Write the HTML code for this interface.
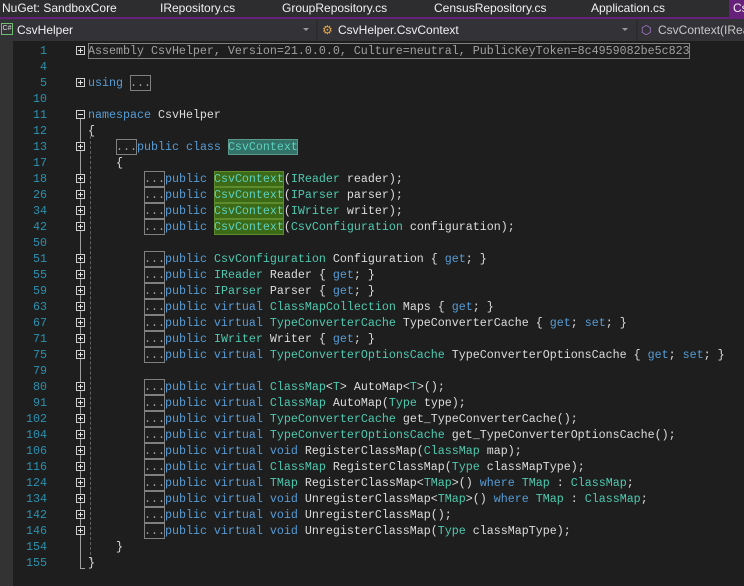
<!DOCTYPE html>
<html><head><meta charset="utf-8"><style>
*{margin:0;padding:0;box-sizing:border-box}
body{width:744px;height:586px;overflow:hidden;background:#1e1e1e;position:relative;font-family:"Liberation Sans",sans-serif}
.tabs{position:absolute;left:0;top:0;width:744px;height:17px;background:#2d2d30;color:#f1f1f1;font-size:12px}
.tabs span{position:absolute;top:1px;white-space:nowrap}
.pl{position:absolute;left:0;top:17px;width:744px;height:2px;background:#68217a}
.nav{position:absolute;left:0;top:19px;width:744px;height:22px;background:#2d2d30;color:#f1f1f1;font-size:12px}
.dd{position:absolute;top:0;height:22px;background:#333337;border-right:2px solid #2d2d30}
.dd span{position:absolute;top:4px;white-space:nowrap}
.arr{position:absolute;top:9px;width:0;height:0;border-left:3px solid transparent;border-right:3px solid transparent;border-top:3px solid #999}
.margin{position:absolute;left:0;top:41px;width:13px;height:545px;background:#333333}
.ln{position:absolute;left:13px;width:34px;text-align:right;color:#2b91af;font-family:"Liberation Mono",monospace;font-size:11.67px;line-height:16px}
.code{position:absolute;left:88px;font-family:"Liberation Mono",monospace;font-size:11.67px;line-height:16px;height:16px;white-space:pre;color:#dcdcdc}
.k{color:#569cd6}.t{color:#4ec9b0}.g{color:#808080}
.b,.hc,.hg{display:inline-block;height:16px;line-height:16px;vertical-align:top}
.b{box-shadow:inset 0 0 0 1px #808080;color:#a0a0a0}
.hc{background:#337268;box-shadow:inset 0 0 0 1px #5a9a8a;color:#5ed0bd}
.hg{background:#3c6a16;box-shadow:inset 0 0 0 1px #5e8c2c;color:#5ed0bd}
.fb{position:absolute;left:76px;width:9px;height:9px;border:1px solid #d0d0d0;background:#1e1e1e}
.fb:before{content:"";position:absolute;left:1px;top:3px;width:5px;height:1px;background:#e0e0e0}
.fb.p:after{content:"";position:absolute;left:3px;top:1px;width:1px;height:5px;background:#e0e0e0}
.vl{position:absolute;left:80px;width:1px;background:#a0a0a0}
.dg{position:absolute;left:90px;width:0;border-left:1px dashed #606060}
</style></head><body>
<div class="tabs">
<span style="left:2px">NuGet: SandboxCore</span>
<span style="left:160px">IRepository.cs</span>
<span style="left:282px">GroupRepository.cs</span>
<span style="left:434px">CensusRepository.cs</span>
<span style="left:591px">Application.cs</span>
<div style="position:absolute;left:729px;top:0;width:15px;height:17px;background:#68217a"></div>
<span style="left:733px">Cs</span>
</div>
<div class="pl"></div>
<div class="nav">
<div class="dd" style="left:0;width:318px"><div style="position:absolute;left:1px;top:4px;width:12px;height:12px;border:1px solid #6fbf73;color:#ddd;font-size:7px;line-height:10px;text-align:center">C#</div><span style="left:17px">CsvHelper</span><div class="arr" style="left:303px"></div></div>
<div class="dd" style="left:318px;width:320px"><span style="left:4px;color:#e8a94a">⚙</span><span style="left:20px">CsvHelper.CsvContext</span><div class="arr" style="left:304px"></div></div>
<div class="dd" style="left:638px;width:106px;border:none"><span style="left:3px;color:#b180d7">⬡</span><span style="left:20px;color:#c8c8c8">CsvContext(IRea</span></div>
</div>
<div class="margin"></div>

<div class="vl" style="top:116px;height:453px"></div>
<div class="vl" style="top:568px;height:1px;width:5px"></div>
<div class="dg" style="top:136px;height:424px"></div>

<div class="ln" style="top:43px">1</div><div class="fb p" style="top:46px"></div><div class="code g" style="top:43px"><span class="b">Assembly CsvHelper, Version=21.0.0.0, Culture=neutral, PublicKeyToken=8c4959082be5c823</span></div>
<div class="ln" style="top:59px">4</div>
<div class="ln" style="top:75px">5</div><div class="fb p" style="top:78px"></div><div class="code" style="top:75px"><span class="k">using</span> <span class="b">...</span></div>
<div class="ln" style="top:91px">10</div>
<div class="ln" style="top:107px">11</div><div class="fb" style="top:110px"></div><div class="code" style="top:107px"><span class="k">namespace</span> CsvHelper</div>
<div class="ln" style="top:123px">12</div><div class="code" style="top:123px">{</div>
<div class="ln" style="top:139px">13</div><div class="fb p" style="top:142px"></div><div class="code" style="top:139px">    <span class="b">...</span><span class="k">public class</span> <span class="hc">CsvContext</span></div>
<div class="ln" style="top:155px">17</div><div class="code" style="top:155px">    {</div>
<div class="ln" style="top:171px">18</div><div class="fb p" style="top:174px"></div><div class="code" style="top:171px">        <span class="b">...</span><span class="k">public</span> <span class="hg">CsvContext</span>(<span class="t">IReader</span> reader);</div>
<div class="ln" style="top:187px">26</div><div class="fb p" style="top:190px"></div><div class="code" style="top:187px">        <span class="b">...</span><span class="k">public</span> <span class="hg">CsvContext</span>(<span class="t">IParser</span> parser);</div>
<div class="ln" style="top:203px">34</div><div class="fb p" style="top:206px"></div><div class="code" style="top:203px">        <span class="b">...</span><span class="k">public</span> <span class="hg">CsvContext</span>(<span class="t">IWriter</span> writer);</div>
<div class="ln" style="top:219px">42</div><div class="fb p" style="top:222px"></div><div class="code" style="top:219px">        <span class="b">...</span><span class="k">public</span> <span class="hg">CsvContext</span>(<span class="t">CsvConfiguration</span> configuration);</div>
<div class="ln" style="top:235px">50</div>
<div class="ln" style="top:251px">51</div><div class="fb p" style="top:254px"></div><div class="code" style="top:251px">        <span class="b">...</span><span class="k">public</span> <span class="t">CsvConfiguration</span> Configuration { <span class="k">get</span>; }</div>
<div class="ln" style="top:267px">55</div><div class="fb p" style="top:270px"></div><div class="code" style="top:267px">        <span class="b">...</span><span class="k">public</span> <span class="t">IReader</span> Reader { <span class="k">get</span>; }</div>
<div class="ln" style="top:283px">59</div><div class="fb p" style="top:286px"></div><div class="code" style="top:283px">        <span class="b">...</span><span class="k">public</span> <span class="t">IParser</span> Parser { <span class="k">get</span>; }</div>
<div class="ln" style="top:299px">63</div><div class="fb p" style="top:302px"></div><div class="code" style="top:299px">        <span class="b">...</span><span class="k">public virtual</span> <span class="t">ClassMapCollection</span> Maps { <span class="k">get</span>; }</div>
<div class="ln" style="top:315px">67</div><div class="fb p" style="top:318px"></div><div class="code" style="top:315px">        <span class="b">...</span><span class="k">public virtual</span> <span class="t">TypeConverterCache</span> TypeConverterCache { <span class="k">get</span>; <span class="k">set</span>; }</div>
<div class="ln" style="top:331px">71</div><div class="fb p" style="top:334px"></div><div class="code" style="top:331px">        <span class="b">...</span><span class="k">public</span> <span class="t">IWriter</span> Writer { <span class="k">get</span>; }</div>
<div class="ln" style="top:347px">75</div><div class="fb p" style="top:350px"></div><div class="code" style="top:347px">        <span class="b">...</span><span class="k">public virtual</span> <span class="t">TypeConverterOptionsCache</span> TypeConverterOptionsCache { <span class="k">get</span>; <span class="k">set</span>; }</div>
<div class="ln" style="top:363px">79</div>
<div class="ln" style="top:379px">80</div><div class="fb p" style="top:382px"></div><div class="code" style="top:379px">        <span class="b">...</span><span class="k">public virtual</span> <span class="t">ClassMap</span>&lt;<span class="t">T</span>&gt; AutoMap&lt;<span class="t">T</span>&gt;();</div>
<div class="ln" style="top:395px">91</div><div class="fb p" style="top:398px"></div><div class="code" style="top:395px">        <span class="b">...</span><span class="k">public virtual</span> <span class="t">ClassMap</span> AutoMap(<span class="t">Type</span> type);</div>
<div class="ln" style="top:411px">102</div><div class="fb p" style="top:414px"></div><div class="code" style="top:411px">        <span class="b">...</span><span class="k">public virtual</span> <span class="t">TypeConverterCache</span> get_TypeConverterCache();</div>
<div class="ln" style="top:427px">104</div><div class="fb p" style="top:430px"></div><div class="code" style="top:427px">        <span class="b">...</span><span class="k">public virtual</span> <span class="t">TypeConverterOptionsCache</span> get_TypeConverterOptionsCache();</div>
<div class="ln" style="top:443px">106</div><div class="fb p" style="top:446px"></div><div class="code" style="top:443px">        <span class="b">...</span><span class="k">public virtual void</span> RegisterClassMap(<span class="t">ClassMap</span> map);</div>
<div class="ln" style="top:459px">116</div><div class="fb p" style="top:462px"></div><div class="code" style="top:459px">        <span class="b">...</span><span class="k">public virtual</span> <span class="t">ClassMap</span> RegisterClassMap(<span class="t">Type</span> classMapType);</div>
<div class="ln" style="top:475px">124</div><div class="fb p" style="top:478px"></div><div class="code" style="top:475px">        <span class="b">...</span><span class="k">public virtual</span> <span class="t">TMap</span> RegisterClassMap&lt;<span class="t">TMap</span>&gt;() <span class="k">where</span> <span class="t">TMap</span> : <span class="t">ClassMap</span>;</div>
<div class="ln" style="top:491px">134</div><div class="fb p" style="top:494px"></div><div class="code" style="top:491px">        <span class="b">...</span><span class="k">public virtual void</span> UnregisterClassMap&lt;<span class="t">TMap</span>&gt;() <span class="k">where</span> <span class="t">TMap</span> : <span class="t">ClassMap</span>;</div>
<div class="ln" style="top:507px">142</div><div class="fb p" style="top:510px"></div><div class="code" style="top:507px">        <span class="b">...</span><span class="k">public virtual void</span> UnregisterClassMap();</div>
<div class="ln" style="top:523px">146</div><div class="fb p" style="top:526px"></div><div class="code" style="top:523px">        <span class="b">...</span><span class="k">public virtual void</span> UnregisterClassMap(<span class="t">Type</span> classMapType);</div>
<div class="ln" style="top:539px">154</div><div class="code" style="top:539px">    }</div>
<div class="ln" style="top:555px">155</div><div class="code" style="top:555px">}</div>
</body></html>
